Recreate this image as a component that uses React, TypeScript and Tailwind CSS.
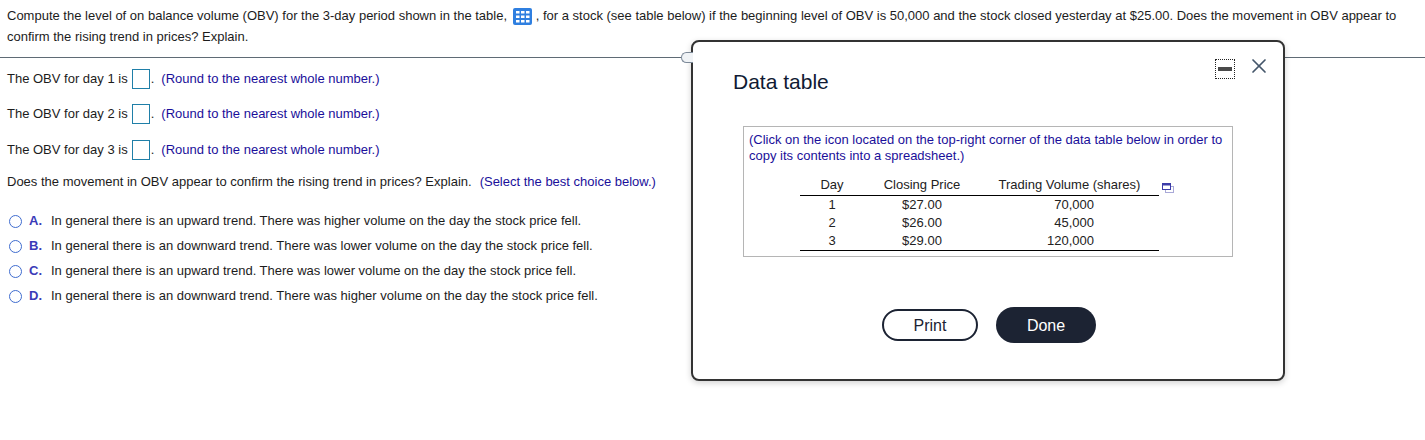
import React from 'react';
import { X } from 'lucide-react';

const font = "font-['Liberation_Sans',Arial,sans-serif]";

const days = [1, 2, 3];

const choices = [
    { letter: 'A.', text: 'In general there is an upward trend. There was higher volume on the day the stock price fell.' },
    { letter: 'B.', text: 'In general there is an downward trend. There was lower volume on the day the stock price fell.' },
    { letter: 'C.', text: 'In general there is an upward trend. There was lower volume on the day the stock price fell.' },
    { letter: 'D.', text: 'In general there is an downward trend. There was higher volume on the day the stock price fell.' },
];

const rows = [
    { day: '1', price: '$27.00', volume: '70,000' },
    { day: '2', price: '$26.00', volume: '45,000' },
    { day: '3', price: '$29.00', volume: '120,000' },
];

function TableIcon() {
    return (
        <svg width="19" height="17" viewBox="0 0 19 17" className="inline-block align-middle ml-[2px] mr-[4px]">
            <rect width="19" height="17" rx="2" fill="#2f7fe0" />
            {[3, 7.5, 12].map(y =>
                [3, 8, 13].map(x => <rect key={`${x}-${y}`} x={x} y={y} width="3.5" height="2.5" fill="#fff" />)
            )}
        </svg>
    );
}

function CopyIcon() {
    return (
        <svg width="12" height="10" viewBox="0 0 12 10">
            <rect x="3.5" y="3.5" width="8" height="6" fill="#fff" stroke="#a9a9d8" />
            <rect x="0.5" y="0.5" width="8" height="6" fill="#fff" stroke="#3c3ca8" />
            <rect x="0.5" y="0.5" width="8" height="2" fill="#3c3ca8" />
        </svg>
    );
}

function DataTableModal() {
    return (
        <div className="absolute left-[691px] top-[40px] w-[594px] h-[341px] bg-white border-2 border-[#333333] rounded-lg shadow-[0_2px_6px_rgba(0,0,0,0.18)]">
            <div className="absolute left-[-12px] top-[10px] w-[12px] h-[11px] bg-[#f0f3f6] border border-[#7d8a99] border-r-0 rounded-l-full" />
            <div className="flex items-start justify-between pl-[40px] pr-[12px]">
                <h2 className="mt-[27px] text-[21px] leading-[26px] text-[#101a33]">Data table</h2>
                <div className="flex items-start gap-[12px] mt-[12px]">
                    <div className="mt-[5px] w-[20px] h-[20px] border border-dotted border-[#222] flex items-center justify-center">
                        <div className="w-[14px] h-[4px] bg-[#4a4a4a]" />
                    </div>
                    <X size={24} strokeWidth={1.7} className="text-[#44566a]" />
                </div>
            </div>
            <div className="mt-[31px] ml-[50px] w-[490px] h-[131px] border border-[#b5b5b5] px-[5px] pt-[5px]">
                <p className="text-[13px] leading-[16px] text-[#1a0f9a]">
                    (Click on the icon located on the top-right corner of the data table below in order to copy its contents into a spreadsheet.)
                </p>
                <div className="flex items-start mt-[12px] ml-[51px]">
                    <table className="w-[359px] table-fixed text-[13px] leading-[18px] text-[#222] border-b border-black">
                        <thead>
                            <tr className="border-b border-black h-[19px]">
                                <th className="w-[64px] font-normal text-center">Day</th>
                                <th className="w-[116px] font-normal text-center">Closing Price</th>
                                <th className="font-normal text-center">Trading Volume (shares)</th>
                            </tr>
                        </thead>
                        <tbody>
                            {rows.map(r => (
                                <tr key={r.day} className="h-[18px]">
                                    <td className="text-center">{r.day}</td>
                                    <td className="text-center">{r.price}</td>
                                    <td className="text-right pr-[65px]">{r.volume}</td>
                                </tr>
                            ))}
                        </tbody>
                    </table>
                    <div className="ml-[3px] mt-[7px]"><CopyIcon /></div>
                </div>
            </div>
            <div className="flex justify-center items-center gap-[18px] mt-[50px] pl-[2px]">
                <button className="w-[96px] h-[32px] pt-px rounded-full border-2 border-[#1c2333] text-[16px] text-[#1c2333] bg-white">Print</button>
                <button className="w-[100px] h-[36px] pt-px rounded-full bg-[#1c2333] text-[16px] text-white">Done</button>
            </div>
        </div>
    );
}

export default function App() {
    return (
        <div className={`relative w-[1425px] h-[440px] bg-white overflow-hidden text-[13px] text-[#1c1c1c] ${font}`}>
            <div className="pl-[7px] pr-[20px] pt-[5px] leading-[21px]">
                Compute the level of on balance volume (OBV) for the 3-day period shown in the table, <TableIcon />, for a stock (see table below) if the beginning level of OBV is 50,000 and the stock closed yesterday at $25.00. Does the movement in OBV appear to confirm the rising trend in prices? Explain.
            </div>
            <div className="h-px bg-[#5f6b75] mt-[10px]" />
            <div className="px-[7px] pt-[11px]">
                <div className="flex flex-col gap-[16.5px]">
                    {days.map(d => (
                        <div key={d} className="flex items-center h-[19px]">
                            The OBV for day {d} is
                            <span className="inline-block w-[18px] h-[20px] border border-[#1f7fa8] ml-[4px] mr-[1px]" />
                            .
                            <span className="ml-[7px] text-[#1a0f9a]">(Round to the nearest whole number.)</span>
                        </div>
                    ))}
                </div>
                <div className="mt-[15px] leading-[16px]">
                    Does the movement in OBV appear to confirm the rising trend in prices? Explain.
                    <span className="ml-[8px] text-[#1a0f9a]">(Select the best choice below.)</span>
                </div>
                <div className="mt-[23px] flex flex-col gap-[9px] pl-[2px]">
                    {choices.map(c => (
                        <div key={c.letter} className="flex items-center h-[16px]">
                            <span className="w-[13px] h-[13px] rounded-full border-[1.5px] border-[#3f6ccf] shrink-0" />
                            <span className="ml-[7px] w-[22px] font-bold text-[#3b3bb8]">{c.letter}</span>
                            {c.text}
                        </div>
                    ))}
                </div>
            </div>
            <DataTableModal />
        </div>
    );
}
